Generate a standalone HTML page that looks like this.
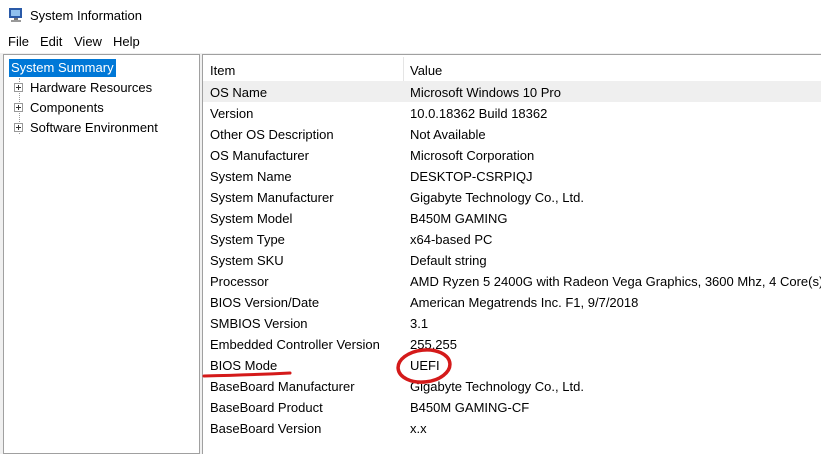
<!DOCTYPE html>
<html><head><meta charset="utf-8"><style>
*{margin:0;padding:0;box-sizing:border-box}
body{width:821px;height:441px;overflow:hidden;background:#f0f0f0;font-family:"Liberation Sans",sans-serif;font-size:13px;color:#000;position:relative}
.title{position:absolute;left:0;top:0;width:821px;height:31px;background:#fff}
.title span{position:absolute;left:30px;top:8px}
.menu{position:absolute;left:0;top:31px;width:821px;height:22px;background:#fff}
.menu span{position:absolute;top:3px}
.left{position:absolute;left:3px;top:54px;width:197px;height:400px;background:#fff;border:1px solid #a0a0a0}
.right{position:absolute;left:202px;top:54px;width:630px;height:400px;background:#fff;border-left:1px solid #a0a0a0;border-top:1px solid #a0a0a0}
.row{position:absolute;left:0;width:630px;height:21px}
.row span{position:absolute;top:4px}
.c1{left:7px}.c2{left:207px}
</style></head><body>
<div class="title">
<svg style="position:absolute;left:8px;top:7px" width="17" height="16"><rect x="1" y="1" width="13" height="10" fill="#2a5aa8"/><rect x="3" y="3" width="9" height="6" fill="#8fc0ee"/><rect x="6" y="11" width="4" height="3" fill="#777"/><rect x="3" y="13" width="10" height="2" fill="#999"/></svg>
<span>System Information</span></div>
<div class="menu"><span style="left:8px">File</span><span style="left:40px">Edit</span><span style="left:74px">View</span><span style="left:113px">Help</span></div>
<div class="left">
<div style="position:absolute;left:5px;top:4px;background:#0078d7;color:#fff;padding:1px 2px;height:18px">System Summary</div>
<div style="position:absolute;left:15px;top:23px;height:56px;border-left:1px dotted #999"></div>
<div style="position:absolute;top:26px;left:10px"><svg width="10" height="10"><rect x=".5" y=".5" width="8" height="8" fill="#fff" stroke="#999"/><path d="M2 4.5h5M4.5 2v5" stroke="#333"/></svg></div>
<div style="position:absolute;top:46px;left:10px"><svg width="10" height="10"><rect x=".5" y=".5" width="8" height="8" fill="#fff" stroke="#999"/><path d="M2 4.5h5M4.5 2v5" stroke="#333"/></svg></div>
<div style="position:absolute;top:66px;left:10px"><svg width="10" height="10"><rect x=".5" y=".5" width="8" height="8" fill="#fff" stroke="#999"/><path d="M2 4.5h5M4.5 2v5" stroke="#333"/></svg></div>
<div style="position:absolute;left:26px;top:25px">Hardware Resources</div>
<div style="position:absolute;left:26px;top:45px">Components</div>
<div style="position:absolute;left:26px;top:65px">Software Environment</div>
</div>
<div class="right">
<div class="row" style="top:4px;height:22px"><span class="c1">Item</span><span class="c2">Value</span></div>
<div style="position:absolute;left:200px;top:2px;height:24px;border-left:1px solid #e5e5e5"></div>
<div class="row" style="top:26px;background:#efefef"><span class="c1">OS Name</span><span class="c2">Microsoft Windows 10 Pro</span></div>
<div class="row" style="top:47px"><span class="c1">Version</span><span class="c2">10.0.18362 Build 18362</span></div>
<div class="row" style="top:68px"><span class="c1">Other OS Description</span><span class="c2">Not Available</span></div>
<div class="row" style="top:89px"><span class="c1">OS Manufacturer</span><span class="c2">Microsoft Corporation</span></div>
<div class="row" style="top:110px"><span class="c1">System Name</span><span class="c2">DESKTOP-CSRPIQJ</span></div>
<div class="row" style="top:131px"><span class="c1">System Manufacturer</span><span class="c2">Gigabyte Technology Co., Ltd.</span></div>
<div class="row" style="top:152px"><span class="c1">System Model</span><span class="c2">B450M GAMING</span></div>
<div class="row" style="top:173px"><span class="c1">System Type</span><span class="c2">x64-based PC</span></div>
<div class="row" style="top:194px"><span class="c1">System SKU</span><span class="c2">Default string</span></div>
<div class="row" style="top:215px"><span class="c1">Processor</span><span class="c2" style="white-space:nowrap">AMD Ryzen 5 2400G with Radeon Vega Graphics, 3600 Mhz, 4 Core(s),</span></div>
<div class="row" style="top:236px"><span class="c1">BIOS Version/Date</span><span class="c2">American Megatrends Inc. F1, 9/7/2018</span></div>
<div class="row" style="top:257px"><span class="c1">SMBIOS Version</span><span class="c2">3.1</span></div>
<div class="row" style="top:278px"><span class="c1">Embedded Controller Version</span><span class="c2">255.255</span></div>
<div class="row" style="top:299px"><span class="c1">BIOS Mode</span><span class="c2">UEFI</span></div>
<div class="row" style="top:320px"><span class="c1">BaseBoard Manufacturer</span><span class="c2">Gigabyte Technology Co., Ltd.</span></div>
<div class="row" style="top:341px"><span class="c1">BaseBoard Product</span><span class="c2">B450M GAMING-CF</span></div>
<div class="row" style="top:362px"><span class="c1">BaseBoard Version</span><span class="c2">x.x</span></div>
</div>
<svg style="position:absolute;left:0;top:0" width="821" height="441">
<path d="M204 376 Q250 375 290 373" stroke="#d41a1a" stroke-width="3" fill="none" stroke-linecap="round"/>
<ellipse cx="424" cy="366" rx="26" ry="16" stroke="#d41a1a" stroke-width="3.5" fill="none" transform="rotate(-6 424 366)"/>
</svg>
</body></html>
